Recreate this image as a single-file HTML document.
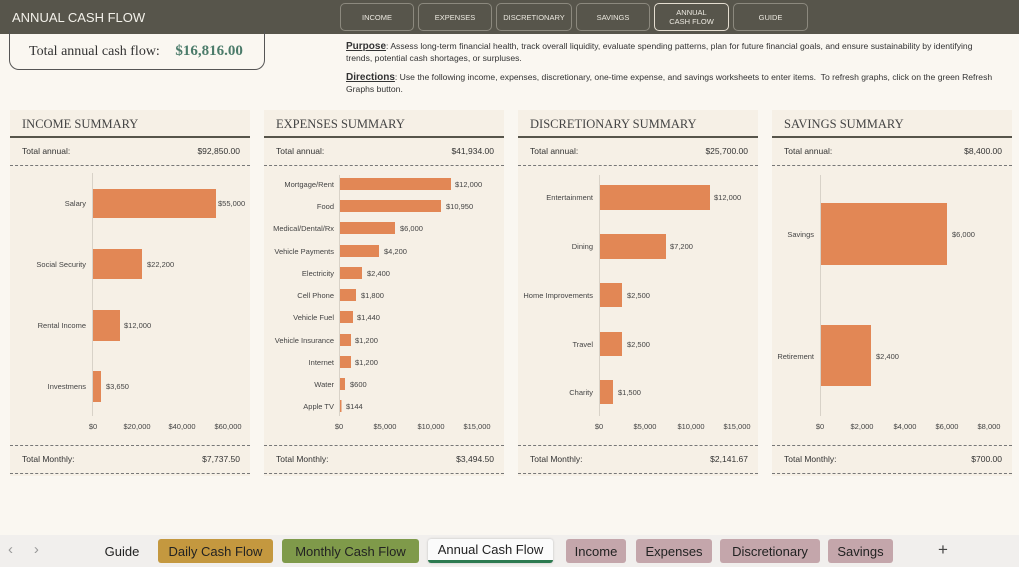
<!DOCTYPE html><html><head><style>
*{margin:0;padding:0;box-sizing:border-box}
body{width:1019px;height:567px;background:#faf7f1;font-family:"Liberation Sans",sans-serif;position:relative;overflow:hidden;color:#333}
.a{position:absolute}
.top{left:0;top:0;width:1019px;height:34px;background:#57554b}
.title{left:12px;top:10px;color:#f3f1ea;font-size:13px}
.nb{top:3px;height:28px;border:1px solid #8c897e;border-radius:5px;color:#ece9e0;font-size:7.5px;display:flex;align-items:center;justify-content:center;text-align:center;line-height:9px}
.tot{left:9px;top:30px;width:256px;height:40px;border:1px solid #555;border-top:none;border-radius:0 0 10px 10px;font-family:"Liberation Serif",serif;font-size:14px;padding:13px 0 0 19px}
.tot b{color:#4b7b6a;font-size:15px;margin-left:12px}
.txt{left:346px;font-size:8.6px;line-height:10.5px;width:655px;color:#333}
.txt u{font-weight:bold;font-size:10px}
.pn{top:110px;width:240px;height:366px;background:#f6f0e6}
.pn h2{position:absolute;left:12px;top:7px;font-family:"Liberation Serif",serif;font-weight:normal;font-size:12.5px;color:#444}
.pn .l1{position:absolute;left:0;right:0;top:26px;border-top:2px solid #57554b}
.row{position:absolute;left:12px;right:10px;font-size:8.5px;display:flex;justify-content:space-between}
.d{position:absolute;left:0;right:0;border-top:1px dashed #777}
.tabs{left:0;top:535px;width:1019px;height:32px;background:#f1efed}
.tb{top:539px;height:24px;font-size:13px;display:flex;align-items:center;justify-content:center;border-radius:3px;color:#222}
</style></head><body>
<div class="a top"></div>
<div class="a title">ANNUAL CASH FLOW</div>
<div class="a nb" style="left:340px;width:74px">INCOME</div>
<div class="a nb" style="left:418px;width:74px">EXPENSES</div>
<div class="a nb" style="left:496px;width:76px">DISCRETIONARY</div>
<div class="a nb" style="left:576px;width:74px">SAVINGS</div>
<div class="a nb" style="left:654px;width:75px;border-color:#e4ddd0">ANNUAL<br>CASH FLOW</div>
<div class="a nb" style="left:733px;width:75px">GUIDE</div>
<div class="a tot">Total annual cash flow: <b>$16,816.00</b></div>
<div class="a txt" style="top:41px"><u>Purpose</u>: Assess long-term financial health, track overall liquidity, evaluate spending patterns, plan for future financial goals, and ensure sustainability by identifying trends, potential cash shortages, or surpluses.</div>
<div class="a txt" style="top:72px"><u>Directions</u>: Use the following income, expenses, discretionary, one-time expense, and savings worksheets to enter items.&nbsp; To refresh graphs, click on the green Refresh Graphs button.</div>

<div class="a pn" style="left:10px"><h2>INCOME SUMMARY</h2><div class="l1"></div><div class="row" style="top:36px"><span>Total annual:</span><span>$92,850.00</span></div><div class="d" style="top:55px"></div><div class="d" style="top:335px"></div><div class="row" style="top:344px"><span>Total Monthly:</span><span>$7,737.50</span></div><div class="d" style="top:363px"></div></div>
<div class="a pn" style="left:264px"><h2>EXPENSES SUMMARY</h2><div class="l1"></div><div class="row" style="top:36px"><span>Total annual:</span><span>$41,934.00</span></div><div class="d" style="top:55px"></div><div class="d" style="top:335px"></div><div class="row" style="top:344px"><span>Total Monthly:</span><span>$3,494.50</span></div><div class="d" style="top:363px"></div></div>
<div class="a pn" style="left:518px"><h2>DISCRETIONARY SUMMARY</h2><div class="l1"></div><div class="row" style="top:36px"><span>Total annual:</span><span>$25,700.00</span></div><div class="d" style="top:55px"></div><div class="d" style="top:335px"></div><div class="row" style="top:344px"><span>Total Monthly:</span><span>$2,141.67</span></div><div class="d" style="top:363px"></div></div>
<div class="a pn" style="left:772px"><h2>SAVINGS SUMMARY</h2><div class="l1"></div><div class="row" style="top:36px"><span>Total annual:</span><span>$8,400.00</span></div><div class="d" style="top:55px"></div><div class="d" style="top:335px"></div><div class="row" style="top:344px"><span>Total Monthly:</span><span>$700.00</span></div><div class="d" style="top:363px"></div></div>

<svg class="a" style="left:0;top:0" width="1019" height="567" font-family="Liberation Sans,sans-serif" font-size="7.5" fill="#444">
<g stroke="#d8d2c8" stroke-width="1"><line x1="92.5" y1="173" x2="92.5" y2="416"/><line x1="339.5" y1="175" x2="339.5" y2="416"/><line x1="599.5" y1="175" x2="599.5" y2="416"/><line x1="820.5" y1="175" x2="820.5" y2="416"/></g>
<g fill="#e28755">
<rect x="93" y="189" width="123" height="29"/><rect x="93" y="249" width="49" height="30"/><rect x="93" y="310" width="27" height="31"/><rect x="93" y="371" width="8" height="31"/>
<rect x="340" y="178" width="111" height="12"/><rect x="340" y="200" width="101" height="12"/><rect x="340" y="222" width="55" height="12"/><rect x="340" y="245" width="39" height="12"/><rect x="340" y="267" width="22" height="12"/><rect x="340" y="289" width="16" height="12"/><rect x="340" y="311" width="13" height="12"/><rect x="340" y="334" width="11" height="12"/><rect x="340" y="356" width="11" height="12"/><rect x="340" y="378" width="5" height="12"/><rect x="340" y="400" width="1.5" height="12"/>
<rect x="600" y="185" width="110" height="25"/><rect x="600" y="234" width="66" height="25"/><rect x="600" y="283" width="22" height="24"/><rect x="600" y="332" width="22" height="24"/><rect x="600" y="380" width="13" height="24"/>
<rect x="821" y="203" width="126" height="62"/><rect x="821" y="325" width="50" height="61"/>
</g>
<g text-anchor="end">
<text x="86" y="206">Salary</text><text x="86" y="267">Social Security</text><text x="86" y="328">Rental Income</text><text x="86" y="389">Investmens</text>
<text x="334" y="187">Mortgage/Rent</text><text x="334" y="209">Food</text><text x="334" y="231">Medical/Dental/Rx</text><text x="334" y="254">Vehicle Payments</text><text x="334" y="276">Electricity</text><text x="334" y="298">Cell Phone</text><text x="334" y="320">Vehicle Fuel</text><text x="334" y="343">Vehicle Insurance</text><text x="334" y="365">Internet</text><text x="334" y="387">Water</text><text x="334" y="409">Apple TV</text>
<text x="593" y="200">Entertainment</text><text x="593" y="249">Dining</text><text x="593" y="298">Home Improvements</text><text x="593" y="347">Travel</text><text x="593" y="395">Charity</text>
<text x="814" y="237">Savings</text><text x="814" y="359">Retirement</text>
</g>
<g>
<text x="218" y="206">$55,000</text><text x="147" y="267">$22,200</text><text x="124" y="328">$12,000</text><text x="106" y="389">$3,650</text>
<text x="455" y="187">$12,000</text><text x="446" y="209">$10,950</text><text x="400" y="231">$6,000</text><text x="384" y="254">$4,200</text><text x="367" y="276">$2,400</text><text x="361" y="298">$1,800</text><text x="357" y="320">$1,440</text><text x="355" y="343">$1,200</text><text x="355" y="365">$1,200</text><text x="350" y="387">$600</text><text x="346" y="409">$144</text>
<text x="714" y="200">$12,000</text><text x="670" y="249">$7,200</text><text x="627" y="298">$2,500</text><text x="627" y="347">$2,500</text><text x="618" y="395">$1,500</text>
<text x="952" y="237">$6,000</text><text x="876" y="359">$2,400</text>
</g>
<g text-anchor="middle">
<text x="93" y="429">$0</text><text x="137" y="429">$20,000</text><text x="182" y="429">$40,000</text><text x="228" y="429">$60,000</text>
<text x="339" y="429">$0</text><text x="385" y="429">$5,000</text><text x="431" y="429">$10,000</text><text x="477" y="429">$15,000</text>
<text x="599" y="429">$0</text><text x="645" y="429">$5,000</text><text x="691" y="429">$10,000</text><text x="737" y="429">$15,000</text>
<text x="820" y="429">$0</text><text x="862" y="429">$2,000</text><text x="905" y="429">$4,000</text><text x="947" y="429">$6,000</text><text x="989" y="429">$8,000</text>
</g>
</svg>

<div class="a tabs"></div>
<div class="a" style="left:8px;top:541px;font-size:15px;color:#999">&#8249;&nbsp;&nbsp;&nbsp;&nbsp;&nbsp;&#8250;</div>
<div class="a tb" style="left:100px;width:44px">Guide</div>
<div class="a tb" style="left:158px;width:115px;background:#c4983f">Daily Cash Flow</div>
<div class="a tb" style="left:282px;width:137px;background:#7f9a4a">Monthly Cash Flow</div>
<div class="a tb" style="left:428px;width:125px;background:#fbfbfb;border-bottom:3px solid #2d7a50;box-shadow:0 0 2px #bbb">Annual Cash Flow</div>
<div class="a tb" style="left:566px;width:60px;background:#c4a6ab">Income</div>
<div class="a tb" style="left:636px;width:76px;background:#c4a6ab">Expenses</div>
<div class="a tb" style="left:720px;width:100px;background:#c4a6ab">Discretionary</div>
<div class="a tb" style="left:828px;width:65px;background:#c4a6ab">Savings</div>
<div class="a" style="left:938px;top:540px;font-size:17px;color:#444">+</div>
</body></html>
